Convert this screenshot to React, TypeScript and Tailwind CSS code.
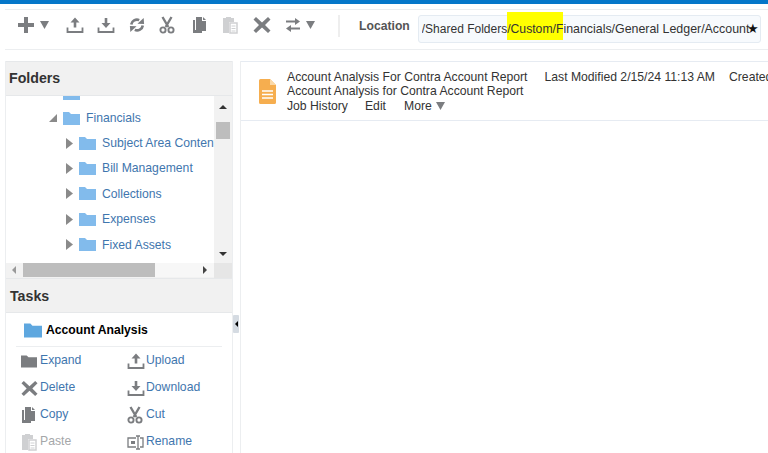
import React from "react";

const G = "#7b7d80";

function Caret({ x = 12, c = G }: { x?: number; c?: string }) {
  return (
    <svg width={x} height={8} viewBox="0 0 12 8" preserveAspectRatio="none" className="shrink-0">
      <path d="M0 0h12L6 8z" fill={c} />
    </svg>
  );
}
function Plus() {
  return (
    <svg width="18" height="18" viewBox="0 0 18 18" className="shrink-0">
      <path d="M7 1h4v6h6v4h-6v6H7v-6H1V7h6z" fill={G} />
    </svg>
  );
}
function Upload({ c = G }: { c?: string }) {
  return (
    <svg width="18" height="18" viewBox="0 0 18 18" className="shrink-0">
      <path d="M9 1.500l4.500 5H10.300v5H7.700v-5H4.500z" fill={c} />
      <path d="M1.500 11.500v4.500h15v-4.500" fill="none" stroke={c} strokeWidth="1.800" />
    </svg>
  );
}
function Download({ c = G }: { c?: string }) {
  return (
    <svg width="18" height="18" viewBox="0 0 18 18" className="shrink-0">
      <path d="M9 12l4.500-5H10.300V2H7.700v5H4.500z" fill={c} />
      <path d="M1.500 11.500v4.500h15v-4.500" fill="none" stroke={c} strokeWidth="1.800" />
    </svg>
  );
}
function Sync() {
  return (
    <svg width="16" height="16" viewBox="0 0 18 18" className="shrink-0">
      <path d="M2.500 8.500a6.500 6.500 0 0 1 9-5" fill="none" stroke={G} strokeWidth="3" />
      <path d="M15.500 9.500a6.500 6.500 0 0 1-9 5" fill="none" stroke={G} strokeWidth="3" />
      <path d="M9.500 7.500L17 8l-.5-7z" fill={G} />
      <path d="M8.500 10.500L1 10l.5 7z" fill={G} />
    </svg>
  );
}
function Cut({ c = G }: { c?: string }) {
  return (
    <svg width="16" height="18" viewBox="0 0 16 18" className="shrink-0">
      <path d="M3.500 1l5.800 10M12.500 1L6.700 11" stroke={c} strokeWidth="2.400" fill="none" />
      <circle cx="4" cy="14" r="2.600" fill="none" stroke={c} strokeWidth="1.900" />
      <circle cx="12" cy="14" r="2.600" fill="none" stroke={c} strokeWidth="1.900" />
    </svg>
  );
}
function Copy({ c = G }: { c?: string }) {
  return (
    <svg width="15" height="18" viewBox="0 0 15 18" className="shrink-0">
      <path d="M1 4h2v10h7v3H1z" fill={c} />
      <path d="M4 1h6v4h4v10H4z" fill={c} />
      <path d="M11 1l3 3h-3z" fill={c} />
    </svg>
  );
}
function Paste() {
  const c = "#cfd0d2";
  return (
    <svg width="16" height="18" viewBox="0 0 16 18" className="shrink-0">
      <path d="M1 2h3V1h5v1h3v4H7v11H1z" fill={c} />
      <rect x="8" y="7" width="7" height="10" fill="none" stroke={c} strokeWidth="1.500" />
      <path d="M9.500 10h4M9.500 12.500h4M9.500 15h4" stroke={c} strokeWidth="1" />
    </svg>
  );
}
function Cross({ s = 18 }: { s?: number }) {
  return (
    <svg width={s} height={s} viewBox="0 0 18 18" className="shrink-0">
      <path d="M3 1l6 5.500L15 1l2.500 2.500L12 9l5.500 5.500L15 17l-6-5.500L3 17 .5 14.500 6 9 .5 3.500z" fill={G} />
    </svg>
  );
}
function Swap() {
  return (
    <svg width="16" height="16" viewBox="0 0 16 16" className="shrink-0">
      <path d="M1 4.500h10" stroke={G} strokeWidth="2" />
      <path d="M10 1l5 3.500L10 8z" fill={G} />
      <path d="M15 11.500H5" stroke={G} strokeWidth="2" />
      <path d="M6 8l-5 3.500L6 15z" fill={G} />
    </svg>
  );
}
function Folder({ c = "#82bbec", w = 17, h = 13 }: { c?: string; w?: number; h?: number }) {
  return (
    <svg width={w} height={h} viewBox="0 0 17 13" className="shrink-0">
      <path d="M0 0h6l2 2h9v11H0z" fill={c} />
    </svg>
  );
}
function ArrowR() {
  return (
    <svg width="7" height="11" viewBox="0 0 7 11" className="shrink-0">
      <path d="M0 0l7 5.500L0 11z" fill="#8a8a8a" />
    </svg>
  );
}
function Doc() {
  return (
    <svg width="17" height="25" viewBox="0 0 17 25" className="shrink-0">
      <path d="M1.500 0H11l6 6v17.500a1.500 1.500 0 0 1-1.500 1.500h-14A1.500 1.500 0 0 1 0 23.500v-22A1.500 1.500 0 0 1 1.500 0z" fill="#f6ae4f" />
      <path d="M11 0v6h6z" fill="#fbd9a8" />
      <path d="M3 12h11M3 15.500h11M3 19h11" stroke="#fff" strokeWidth="1.500" />
    </svg>
  );
}
function Rename() {
  return (
    <svg width="17" height="15" viewBox="0 0 17 15" className="shrink-0">
      <path d="M9 3H1v9h8M13 3h3v9h-3" fill="none" stroke={G} strokeWidth="1.300" />
      <path d="M9 1h4M9 14h4M11 1v13" stroke={G} strokeWidth="1.300" fill="none" />
      <rect x="4" y="6" width="4" height="3" fill={G} />
    </svg>
  );
}

function TreeRow({ label }: { label: string }) {
  return (
    <div className="flex h-[25.400px] items-center pl-[60px] whitespace-nowrap">
      <ArrowR />
      <span className="ml-[6px] flex"><Folder /></span>
      <span className="ml-[6px] text-[#3f76ae]">{label}</span>
    </div>
  );
}

function Task({ icon, label, muted }: { icon: React.ReactNode; label: string; muted?: boolean }) {
  return (
    <div className="flex h-[27px] items-center">
      <span className="flex w-[19px] shrink-0 items-center justify-start">{icon}</span>
      <span className={`-mt-[1px] ${muted ? "text-[#a5a7a9]" : "text-[#3f76ae]"}`}>{label}</span>
    </div>
  );
}

export default function App() {
  return (
    <div className="flex h-[453px] w-[768px] flex-col overflow-hidden bg-white text-[12.200px] text-[#333] [font-family:'Liberation_Sans',Arial,sans-serif]">
      <div className="h-[3.500px] shrink-0 bg-[#0577c9]" />
      <div className="ml-[5px] mt-[5px] flex h-[41px] shrink-0 items-start border-y border-[#eceef0]">
        <div className="ml-[12px] mt-[6px] flex items-center">
          <Plus />
          <span className="ml-[5px] flex"><Caret x={9} /></span>
          <span className="ml-[17px] flex"><Upload /></span>
          <span className="ml-[13px] flex"><Download /></span>
          <span className="ml-[14px] flex"><Sync /></span>
          <span className="ml-[14px] flex"><Cut /></span>
          <span className="ml-[17px] flex"><Copy /></span>
          <span className="ml-[15px] flex"><Paste /></span>
          <span className="ml-[15px] flex"><Cross /></span>
          <span className="ml-[14px] flex"><Swap /></span>
          <span className="ml-[5px] flex"><Caret x={9} /></span>
        </div>
        <div className="ml-[23px] mt-[5px] h-[22px] w-[2px] bg-[#eeeeee]" />
        <div className="ml-[19px] mt-[9px] font-bold leading-[14px] text-[#555]">Location</div>
        <div className="relative ml-[8px] mt-[5px] flex h-[28px] w-[343px] items-center rounded-[3px] border border-[#e4ebf2] bg-[#f7fafd] pl-[3px]">
          <div className="-mt-[3px] w-[328px] overflow-hidden whitespace-nowrap leading-[28px]">
            <span className="text-[12px]">/Shared Folders</span>
            <span className="inline-block h-[28px] bg-[#ffff00] pt-[5px] leading-[24px]">/Custom/F</span>
            <span className="text-[12.400px]">inancials/General Ledger/Account Analysis</span>
          </div>
          <span className="absolute right-[1px] top-[4px] text-[13px] leading-[18px] text-[#111]">★</span>
        </div>
      </div>

      <div className="mt-[11px] flex min-h-0 flex-1">
        <div className="ml-[5px] flex w-[228px] shrink-0 flex-col border-x border-[#eceef0]">
          <div className="flex h-[35px] shrink-0 items-center border-y border-[#e6e8ea] bg-[#f1f1f1] pl-[3px] pt-[2px] text-[14.200px] font-bold text-[#333]">
            Folders
          </div>
          <div className="flex h-[167px] shrink-0">
            <div className="w-[209px] overflow-hidden">
              <div className="h-[4px] overflow-hidden pl-[57px]">
                <div className="-mt-[9px]"><Folder /></div>
              </div>
              <div className="flex h-[31px] items-center whitespace-nowrap pl-[42px] pt-[6px]">
                <svg width="10" height="10" viewBox="0 0 10 10" className="shrink-0">
                  <path d="M9 1v8H1z" fill="#8a8a8a" />
                </svg>
                <span className="ml-[5px] flex"><Folder /></span>
                <span className="ml-[6px] text-[#3f76ae]">Financials</span>
              </div>
              <TreeRow label="Subject Area Content" />
              <TreeRow label="Bill Management" />
              <TreeRow label="Collections" />
              <TreeRow label="Expenses" />
              <TreeRow label="Fixed Assets" />
            </div>
            <div className="flex w-[18px] flex-col items-center bg-[#f2f2f2]">
              <div className="mt-[9px] h-0 w-0 border-x-[4px] border-b-[4px] border-x-transparent border-b-[#333]" />
              <div className="mt-[13px] h-[17px] w-[14px] bg-[#bdbdbd]" />
              <div className="mt-auto mb-[7px] h-0 w-0 border-x-[4px] border-t-[4px] border-x-transparent border-t-[#333]" />
            </div>
          </div>
          <div className="flex h-[15px] shrink-0 items-stretch">
            <div className="flex flex-1 items-center bg-[#f2f2f2]">
              <div className="ml-[6px] h-0 w-0 border-y-[4px] border-r-[4px] border-y-transparent border-r-[#999]" />
              <div className="ml-[7px] h-[14px] w-[132px] bg-[#bdbdbd]" />
              <div className="h-[14px] flex-1 bg-[#f7f7f7]" />
              <div className="mr-[7px] ml-[-11px] h-0 w-0 border-y-[4px] border-l-[4px] border-y-transparent border-l-[#444]" />
            </div>
            <div className="w-[18px] bg-[#e6e6e6]" />
          </div>
          <div className="flex h-[35px] shrink-0 items-center border-y border-[#e6e8ea] bg-[#f1f1f1] pl-[4px] pt-[3px] text-[14.200px] font-bold text-[#333]">
            Tasks
          </div>
          <div className="min-h-0 flex-1 px-[10px]">
            <div className="flex h-[34px] items-center border-b border-[#eceef0] pl-[8px] pt-[2px]">
              <Folder c="#5ea7df" w={18} h={15} />
              <span className="ml-[4px] font-bold text-black">Account Analysis</span>
            </div>
            <div className="grid grid-cols-[106px_1fr] pl-[5px] pt-[1px]">
              <Task icon={<Folder c={G} w={16} h={13} />} label="Expand" />
              <Task icon={<Upload />} label="Upload" />
              <Task icon={<Cross s={17} />} label="Delete" />
              <Task icon={<Download />} label="Download" />
              <Task icon={<Copy />} label="Copy" />
              <Task icon={<Cut />} label="Cut" />
              <Task icon={<Paste />} label="Paste" muted />
              <Task icon={<Rename />} label="Rename" />
            </div>
          </div>
        </div>

        <div className="w-[6px] shrink-0 pt-[254px]">
          <div className="flex h-[18px] w-[6px] items-center justify-center rounded-[1px] bg-[#d5dbe2]">
            <div className="h-0 w-0 border-y-[3px] border-r-[3px] border-y-transparent border-r-black" />
          </div>
        </div>

        <div className="ml-[1px] min-w-0 flex-1 border-l border-[#eceef0]">
          <div className="flex h-[60px] items-start overflow-hidden whitespace-nowrap border-y border-[#e6ebf2]">
            <div className="ml-[18px] mt-[17px] flex"><Doc /></div>
            <div className="ml-[11px] mt-[8px] leading-[14.500px]">
              <div>Account Analysis For Contra Account Report</div>
              <div>Account Analysis for Contra Account Report</div>
              <div className="flex items-center">
                <span>Job History</span>
                <span className="ml-[17px]">Edit</span>
                <span className="ml-[18px]">More</span>
                <span className="ml-[4px] flex"><Caret x={9} /></span>
              </div>
            </div>
            <div className="ml-[17px] mt-[8px] leading-[14.500px]">Last Modified 2/15/24 11:13 AM</div>
            <div className="ml-[14px] mt-[8px] leading-[14.500px]">Created By</div>
          </div>
        </div>
      </div>
    </div>
  );
}
